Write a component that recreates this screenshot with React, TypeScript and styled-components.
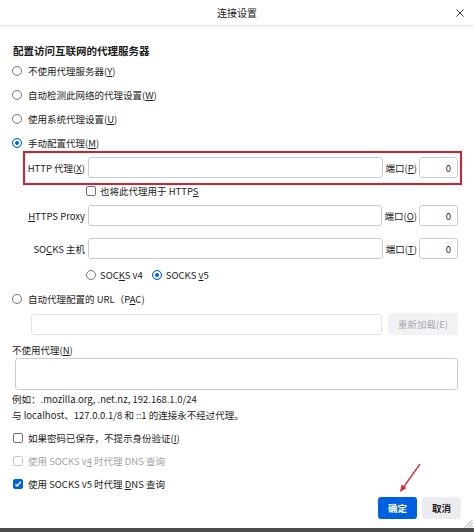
import styled, { createGlobalStyle } from "styled-components";

const GlobalStyle = createGlobalStyle`
  html, body {
    margin: 0;
    padding: 0;
    background: #fff;
  }
  body {
    font-family: "Noto Sans CJK SC", "Noto Sans", sans-serif;
    font-size: 9.5px;
    color: #1c1b22;
  }
  * {
    box-sizing: border-box;
  }
`;

const Key = styled.span`
  text-decoration: underline;
  text-underline-offset: 1px;
`;

const Radio = ({ checked }: { checked?: boolean }) => <RadioDot $checked={checked} />;

const Check = ({ checked, disabled }: { checked?: boolean; disabled?: boolean }) => (
  <CheckBox $checked={checked} $disabled={disabled}>
    {checked && (
      <svg width="8" height="8" viewBox="0 0 8 8">
        <path d="M1.3 4.2 L3.2 6 L6.8 1.8" fill="none" stroke="#fff" strokeWidth="1.5" />
      </svg>
    )}
  </CheckBox>
);

const ProxyField = ({
  label,
  port,
  highlight,
}: {
  label: React.ReactNode;
  port: React.ReactNode;
  highlight?: boolean;
}) => (
  <ProxyRow $highlight={highlight}>
    <FieldLabel>{label}</FieldLabel>
    <TextInput />
    <PortLabel>
      端口({port})
    </PortLabel>
    <PortInput defaultValue="0" />
  </ProxyRow>
);

export default function App() {
  return (
    <Dialog>
      <GlobalStyle />
      <Header>
        <Title>连接设置</Title>
        <Close>
          <svg width="8" height="8" viewBox="0 0 8 8">
            <path d="M0.5 0.5 L7.5 7.5 M7.5 0.5 L0.5 7.5" stroke="#3a3a40" strokeWidth="1" />
          </svg>
        </Close>
      </Header>

      <Body>
        <Heading>配置访问互联网的代理服务器</Heading>
        <RadioGroup>
          <OptionRow>
            <Radio />
            <span>
              不使用代理服务器(<Key>Y</Key>)
            </span>
          </OptionRow>
          <OptionRow>
            <Radio />
            <span>
              自动检测此网络的代理设置(<Key>W</Key>)
            </span>
          </OptionRow>
          <OptionRow>
            <Radio />
            <span>
              使用系统代理设置(<Key>U</Key>)
            </span>
          </OptionRow>
          <OptionRow>
            <Radio checked />
            <span>
              手动配置代理(<Key>M</Key>)
            </span>
          </OptionRow>
        </RadioGroup>

        <ProxyField
          highlight
          label={
            <>
              HTTP 代理(<Key>X</Key>)
            </>
          }
          port={<Key>P</Key>}
        />
        <SubRow>
          <Check />
          <span>
            也将此代理用于 HTTP<Key>S</Key>
          </span>
        </SubRow>
        <Spacer $h={8} />
        <ProxyField
          label={
            <>
              <Key>H</Key>TTPS Proxy
            </>
          }
          port={<Key>O</Key>}
        />
        <Spacer $h={12} />
        <ProxyField
          label={
            <>
              SO<Key>C</Key>KS 主机
            </>
          }
          port={<Key>T</Key>}
        />

        <VersionRow>
          <VersionItem>
            <Radio />
            <span>
              SOC<Key>K</Key>S v4
            </span>
          </VersionItem>
          <VersionItem>
            <Radio checked />
            <span>
              SOCKS <Key>v</Key>5
            </span>
          </VersionItem>
        </VersionRow>

        <PacOption>
          <Radio />
          <span>
            自动代理配置的 URL（P<Key>A</Key>C)
          </span>
        </PacOption>
        <PacRow>
          <TextInput $disabled />
          <ReloadButton>重新加载(E)</ReloadButton>
        </PacRow>

        <SectionLabel>
          不使用代理(<Key>N</Key>)
        </SectionLabel>
        <NoProxyArea />
        <Hints>
          <div>例如：.mozilla.org, .net.nz, 192.168.1.0/24</div>
          <div>与 localhost、127.0.0.1/8 和 ::1 的连接永不经过代理。</div>
        </Hints>

        <CheckList>
          <CheckRow>
            <Check />
            <span>
              如果密码已保存，不提示身份验证(<Key>I</Key>)
            </span>
          </CheckRow>
          <CheckRow $disabled>
            <Check disabled />
            <span>
              使用 SOCKS v<Key>4</Key> 时代理 DNS 查询
            </span>
          </CheckRow>
          <CheckRow>
            <Check checked />
            <span>
              使用 SOCKS v5 时代理 <Key>D</Key>NS 查询
            </span>
          </CheckRow>
        </CheckList>

        <ButtonRow>
          <Button $primary>确定</Button>
          <Button>取消</Button>
        </ButtonRow>
      </Body>

      <BottomBar />
      <ResizeGrip width="10" height="10" viewBox="0 0 10 10">
        <path d="M9.5 2 L2 9.5 M9.5 5 L5 9.5 M9.5 8 L8 9.5" stroke="#8a8a8a" strokeWidth="0.8" />
      </ResizeGrip>
      <Arrow width="28" height="36" viewBox="0 0 28 36">
        <line x1="24" y1="4" x2="7" y2="28" stroke="#d42a34" strokeWidth="1.3" />
        <polygon points="4,32 10.5,28.1 5.6,24.6" fill="#d42a34" />
      </Arrow>
    </Dialog>
  );
}

const Dialog = styled.div`
  position: relative;
  width: 474px;
  height: 532px;
  display: flex;
  flex-direction: column;
  background: #fff;
  overflow: hidden;
`;

const Header = styled.header`
  flex: none;
  height: 26px;
  display: grid;
  grid-template-columns: 1fr auto 1fr;
  align-items: center;
  border-bottom: 1px solid #e4e4e4;
  box-shadow: 0 1px 2px rgba(0, 0, 0, 0.05);
`;

const Title = styled.div`
  grid-column: 2;
  font-size: 10px;
`;

const Close = styled.div`
  grid-column: 3;
  justify-self: end;
  display: flex;
  margin-right: 10px;
`;

const Body = styled.main`
  display: flex;
  flex-direction: column;
  padding: 0 12px;
`;

const Heading = styled.h2`
  margin: 17px 0 0 1px;
  height: 16px;
  line-height: 16px;
  font-size: 10.5px;
  font-weight: 700;
`;

const RadioGroup = styled.div`
  display: flex;
  flex-direction: column;
  gap: 8px;
  margin-top: 4px;
`;

const OptionRow = styled.label`
  display: flex;
  align-items: center;
  gap: 6px;
  height: 16px;
  white-space: nowrap;
`;

const RadioDot = styled.span<{ $checked?: boolean }>`
  flex: none;
  width: 10px;
  height: 10px;
  border-radius: 50%;
  border: 1px solid ${(p) => (p.$checked ? "#0061e0" : "#75757e")};
  background: ${(p) => (p.$checked ? "#0061e0" : "#fff")};
  box-shadow: ${(p) => (p.$checked ? "inset 0 0 0 2px #fff" : "none")};
`;

const CheckBox = styled.span<{ $checked?: boolean; $disabled?: boolean }>`
  flex: none;
  width: 10px;
  height: 10px;
  border-radius: 2px;
  display: flex;
  align-items: center;
  justify-content: center;
  border: 1px solid
    ${(p) => (p.$checked ? "#0061e0" : p.$disabled ? "#c9c9cf" : "#6f6f78")};
  background: ${(p) => (p.$checked ? "#0061e0" : "#fff")};
`;

const ProxyRow = styled.div<{ $highlight?: boolean }>`
  display: flex;
  align-items: center;
  margin-left: 11px;
  padding: ${(p) => (p.$highlight ? "4px 2px 5px 0" : "0 2px 0 0")};
  border-style: solid;
  border-color: ${(p) => (p.$highlight ? "#d3212f" : "transparent")};
  border-width: ${(p) => (p.$highlight ? "2px" : "0 2px")};
`;

const FieldLabel = styled.span`
  flex: none;
  width: 60px;
  margin-right: 3px;
  display: flex;
  justify-content: flex-end;
  white-space: nowrap;
`;

const TextInput = styled.input<{ $disabled?: boolean }>`
  flex: 1;
  min-width: 0;
  height: 21px;
  border: 1px solid ${(p) => (p.$disabled ? "#e2e2e6" : "#cbcbd2")};
  border-radius: 3px;
  background: #fff;
  outline: none;
`;

const PortLabel = styled.span`
  flex: none;
  margin: 0 2px 0 3px;
  white-space: nowrap;
`;

const PortInput = styled.input`
  flex: none;
  width: 39px;
  height: 21px;
  padding: 0 6px;
  border: 1px solid #cbcbd2;
  border-radius: 3px;
  text-align: right;
  font: inherit;
  color: #1c1b22;
  outline: none;
`;

const SubRow = styled.label`
  display: flex;
  align-items: center;
  gap: 4px;
  height: 12px;
  padding-left: 74px;
  white-space: nowrap;
`;

const Spacer = styled.div<{ $h: number }>`
  flex: none;
  height: ${(p) => p.$h}px;
`;

const VersionRow = styled.div`
  display: flex;
  align-items: center;
  gap: 9px;
  height: 14px;
  margin-top: 9px;
  padding-left: 74px;
`;

const VersionItem = styled.label`
  display: flex;
  align-items: center;
  gap: 4px;
  white-space: nowrap;
`;

const PacOption = styled(OptionRow)`
  margin-top: 9px;
`;

const PacRow = styled.div`
  display: flex;
  align-items: center;
  gap: 6px;
  height: 22px;
  margin: 6px 4px 0 19px;
`;

const ReloadButton = styled.div`
  flex: none;
  width: 70px;
  height: 22px;
  display: flex;
  align-items: center;
  justify-content: center;
  border-radius: 3px;
  background: #f2f2f4;
  color: #a9a9ae;
`;

const SectionLabel = styled.div`
  height: 14px;
  line-height: 14px;
  margin-top: 8px;
`;

const NoProxyArea = styled.textarea`
  height: 32px;
  margin: 1px 4px 0 3px;
  border: 1px solid #cbcbd2;
  border-radius: 3px;
  resize: none;
  outline: none;
`;

const Hints = styled.div`
  margin-top: 1px;
  line-height: 16px;
  white-space: nowrap;
`;

const CheckList = styled.div`
  display: flex;
  flex-direction: column;
  margin-top: 3px;
`;

const CheckRow = styled.label<{ $disabled?: boolean }>`
  display: flex;
  align-items: center;
  gap: 5px;
  height: 23px;
  padding-left: 1px;
  white-space: nowrap;
  color: ${(p) => (p.$disabled ? "#a3a3a8" : "inherit")};
`;

const ButtonRow = styled.div`
  display: flex;
  justify-content: flex-end;
  gap: 5px;
  margin-top: 2px;
  padding-right: 1px;
`;

const Button = styled.div<{ $primary?: boolean }>`
  width: 39px;
  height: 22px;
  display: flex;
  align-items: center;
  justify-content: center;
  border-radius: 3px;
  font-weight: 700;
  background: ${(p) => (p.$primary ? "#0061e0" : "#ececf0")};
  color: ${(p) => (p.$primary ? "#fff" : "#1c1b22")};
`;

const BottomBar = styled.div`
  margin-top: auto;
  height: 4px;
  background: #4d4d4d;
`;

const ResizeGrip = styled.svg`
  position: absolute;
  right: 1px;
  bottom: 4px;
`;

const Arrow = styled.svg`
  position: absolute;
  left: 396px;
  top: 460px;
`;
